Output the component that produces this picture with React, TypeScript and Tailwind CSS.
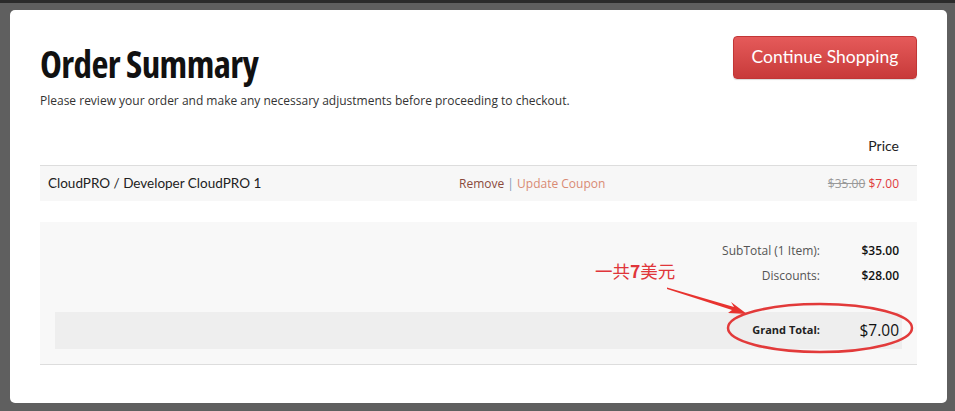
import React from 'react';

const App: React.FC = () => {
  return (
    <div className="h-[411px] w-full bg-[#5f5f5f] border-t-[3px] border-[#2b2b2b] pt-[7px] pl-[10px] pr-[8px] overflow-hidden">
      <div className="relative h-[393px] bg-white rounded-[5px] px-[30px] pt-[26px] font-['Open_Sans',sans-serif]">
        {/* header */}
        <div className="flex justify-between items-start">
          <div className="pt-[6px]">
            <h1 className="text-[37px] leading-[44px] font-bold font-stretch-condensed tracking-[-0.6px] text-[#111]">
              Order Summary
            </h1>
            <p className="mt-[7px] text-[12px] leading-[16px] text-[#333]">
              Please review your order and make any necessary adjustments before proceeding to checkout.
            </p>
          </div>
          <button className="h-[43px] w-[184px] rounded-[4px] bg-gradient-to-b from-[#e55a5a] to-[#c83a3a] border border-[#c23636] text-white text-[17.5px] font-['Lato',sans-serif] shadow-[0_1px_1px_rgba(0,0,0,0.15)]">
            Continue Shopping
          </button>
        </div>

        {/* items table */}
        <div className="mt-[27px]">
          <div className="flex justify-end pr-[18px] pb-[9px] text-[14px] leading-[20px] font-['Lato',sans-serif] text-[#222]">
            Price
          </div>
          <div className="flex items-center h-[36px] bg-[#f7f7f7] border-t border-[#dddddd] px-[8px] pr-[18px]">
            <div className="w-[411px] text-[13.5px] font-['Lato',sans-serif] text-[#222]">
              CloudPRO / Developer CloudPRO 1
            </div>
            <div className="flex-1 text-[12px]">
              <span className="text-[#8a4a3c]">Remove</span>
              <span className="text-[#7f97b8]"> | </span>
              <span className="text-[#d98a74]">Update Coupon</span>
            </div>
            <div className="text-[12px]">
              <span className="line-through text-[#999]">$35.00</span>{' '}
              <span className="text-[#e03a3c]">$7.00</span>
            </div>
          </div>
        </div>

        {/* totals */}
        <div className="mt-[21px] bg-[#f8f8f8] border-b border-[#dddddd] pt-[16px] pb-[15px] px-[15px]">
          <div className="flex justify-end items-center h-[25px] pr-[3px] text-[12px]">
            <span className="text-[#555]">SubTotal (1 Item):</span>
            <span className="w-[79px] text-right font-semibold text-[#111]">$35.00</span>
          </div>
          <div className="flex justify-end items-center h-[25px] pr-[3px] text-[12px]">
            <span className="text-[#555]">Discounts:</span>
            <span className="w-[79px] text-right font-semibold text-[#111]">$28.00</span>
          </div>
          <div className="mt-[24px] flex justify-end items-center h-[37px] bg-[#eeeeee] pr-[3px]">
            <span className="text-[11px] font-bold text-[#222]">Grand Total:</span>
            <span className="w-[79px] text-right text-[15.5px] text-[#111]">$7.00</span>
          </div>
        </div>

        {/* annotation */}
        <div className="absolute left-[585px] top-[250px] text-[17.5px] leading-[22px] text-[#e0353a] font-['Noto_Sans_CJK_SC',sans-serif]">
          一共<span className="font-bold">7</span>美元
        </div>
        <svg className="absolute left-0 top-0 pointer-events-none" width="937" height="393">
          <path d="M657,277.5 L724,297 L721,292 L737,304 L718,303 L722,300 L657,279 Z" fill="#e8332f" />
          <ellipse cx="810" cy="318" rx="92" ry="24" fill="none" stroke="#e23a3a" strokeWidth="2.5" />
        </svg>
      </div>
    </div>
  );
};

export default App;
